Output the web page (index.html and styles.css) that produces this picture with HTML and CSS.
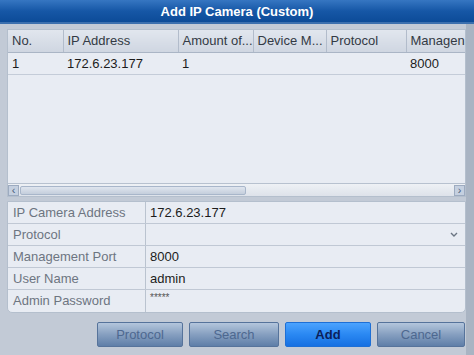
FILE: index.html
```html
<!DOCTYPE html>
<html lang="en">
  <head>
    <meta charset="UTF-8" />
    <title>Add IP Camera (Custom)</title>
    <link rel="stylesheet" href="styles.css">
  </head>
  <body>
    <div class="dialog">
      <div class="titlebar">Add IP Camera (Custom)</div>

      <div class="content">
        <!-- Camera list -->
        <div class="list">
          <div class="list-body">
            <table class="grid">
              <tr class="head">
                <th class="c-no">No.</th>
                <th class="c-ip">IP Address</th>
                <th class="c-amt">Amount of...</th>
                <th class="c-dev">Device M...</th>
                <th class="c-proto">Protocol</th>
                <th class="c-mgmt">Managen</th>
              </tr>
              <tr>
                <td>1</td>
                <td>172.6.23.177</td>
                <td>1</td>
                <td></td>
                <td></td>
                <td>8000</td>
              </tr>
            </table>
          </div>
          <div class="hscroll">
            <span class="arrow">&lsaquo;</span>
            <span class="thumb"></span>
            <span class="track"></span>
            <span class="arrow">&rsaquo;</span>
          </div>
        </div>

        <!-- Camera form -->
        <div class="form">
          <div class="form-row">
            <div class="label">IP Camera Address</div>
            <div class="value">172.6.23.177</div>
          </div>
          <div class="form-row">
            <div class="label">Protocol</div>
            <div class="value select">
              <svg class="caret" width="8" height="5" viewBox="0 0 8 5">
                <path d="M1 1 L4 4 L7 1" fill="none" stroke="#6b7583" stroke-width="1.4"/>
              </svg>
            </div>
          </div>
          <div class="form-row">
            <div class="label">Management Port</div>
            <div class="value">8000</div>
          </div>
          <div class="form-row">
            <div class="label">User Name</div>
            <div class="value">admin</div>
          </div>
          <div class="form-row">
            <div class="label">Admin Password</div>
            <div class="value pwd">*****</div>
          </div>
        </div>
      </div>

      <div class="buttons">
        <button class="btn">Protocol</button>
        <button class="btn btn-search">Search</button>
        <button class="btn btn-add">Add</button>
        <button class="btn btn-cancel">Cancel</button>
      </div>
    </div>
  </body>
</html>
```

FILE: styles.css
```css
* {
  margin: 0;
  padding: 0;
  box-sizing: border-box;
}

body {
  font-family: "Liberation Sans", Arial, sans-serif;
  font-size: 13px;
  color: #1c1c1c;
  background-color: #c6ceda;
  width: 474px;
  height: 355px;
  overflow: hidden;
}

.dialog {
  display: flex;
  flex-direction: column;
  height: 355px;
}

/* Title bar */
.titlebar {
  height: 24px;
  line-height: 24px;
  text-align: center;
  color: #fff;
  font-weight: bold;
  font-size: 13px;
  background: linear-gradient(#3676c2, #1657a6 50%, #0c4b98);
  border-bottom: 2px solid #3b6fae;
}

.content {
  display: flex;
  flex-direction: column;
  gap: 4px;
  padding: 5px 8px 0 7px;
  background: linear-gradient(90deg, #c2cad6 0, #c2cad6 466px, #a9b4c3 466px);
}

/* List */
.list {
  height: 168px;
  display: flex;
  flex-direction: column;
  background-color: #e8ecf3;
  border: 1px solid #b4bfcd;
}

.list-body {
  flex: 1;
  overflow: hidden;
}

.grid {
  border-collapse: collapse;
  table-layout: fixed;
  width: 470px;
}

.grid th,
.grid td {
  height: 22px;
  padding: 0 4px;
  text-align: left;
  font-weight: normal;
  white-space: nowrap;
  overflow: hidden;
}

.grid th {
  color: #333a44;
  background: linear-gradient(#e1e6ee, #cfd6e1);
  border-right: 1px solid #b2bccb;
  border-bottom: 1px solid #aab5c5;
}

.grid td {
  border-bottom: 1px solid #c4ccd8;
}

.c-no { width: 55px; }
.c-ip { width: 115px; }
.c-amt { width: 75px; }
.c-dev { width: 73px; }
.c-proto { width: 80px; }
.c-mgmt { width: 72px; }

/* Horizontal scrollbar */
.hscroll {
  display: flex;
  align-items: center;
  height: 13px;
  border-top: 1px solid #b7c1cf;
  background: linear-gradient(#eef1f5, #dde2ea);
}

.arrow {
  width: 11px;
  height: 11px;
  line-height: 9px;
  font-size: 11px;
  text-align: center;
  color: #4a5d7a;
  background-color: #c5d0e0;
  border: 1px solid #9dabc0;
}

.thumb {
  width: 226px;
  height: 9px;
  margin: 0 1px;
  border: 1px solid #a8b6ca;
  border-radius: 2px;
  background: linear-gradient(#dfe5ee, #c4cedc);
}

.track {
  flex: 1;
}

/* Form */
.form {
  background-color: #e8ecf3;
  border: 1px solid #b4bfcd;
  border-radius: 0 0 5px 5px;
}

.form-row {
  display: flex;
  height: 22px;
  line-height: 21px;
  border-bottom: 1px solid #c0c8d4;
}

.form-row:last-child {
  border-bottom: none;
}

.label {
  width: 138px;
  padding-left: 5px;
  color: #6d7581;
  border-right: 1px solid #bac3cf;
}

.value {
  flex: 1;
  padding-left: 4px;
}

.select {
  display: flex;
  justify-content: flex-end;
  align-items: center;
}

.caret {
  margin-right: 7px;
}

.pwd {
  font-size: 10px;
  color: #555;
  line-height: 16px;
}

/* Buttons */
.buttons {
  flex: 1;
  display: flex;
  justify-content: flex-end;
  gap: 6px;
  padding: 9px 9px 0 0;
  background: linear-gradient(90deg, #c2cad6 0, #c2cad6 466px, #a9b4c3 466px);
}

.btn {
  width: 86px;
  height: 25px;
  font-family: inherit;
  font-size: 13px;
  color: #4d6890;
  border: 1px solid #56739b;
  border-radius: 2px;
  background: linear-gradient(#b4c6dc, #869fc0 50%, #5e7ea8);
  cursor: pointer;
}

.btn-search { width: 90px; }

.btn-add {
  color: #0b1f5a;
  font-weight: bold;
  border-color: #1d6fd6;
  background: linear-gradient(#4ba3ff, #2a88f2 50%, #1670e2);
}

.btn-cancel { width: 88px; }
```
